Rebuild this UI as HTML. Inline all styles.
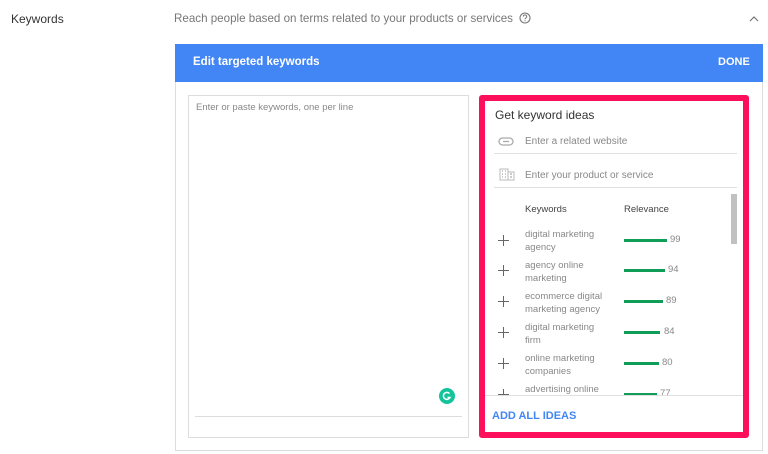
<!DOCTYPE html>
<html><head><style>
*{margin:0;padding:0;box-sizing:border-box}
body{width:768px;height:454px;background:#fff;font-family:"Liberation Sans",sans-serif;position:relative;overflow:hidden;color:#333}
.a{position:absolute}
.kw{font-size:9.5px;color:#888;line-height:12.5px;left:525px;width:90px}
.pl{left:498px;width:12px;height:12px}
.pl:before{content:"";position:absolute;left:0;top:5px;width:11px;height:1.4px;background:#666}
.pl:after{content:"";position:absolute;left:4.8px;top:0;width:1.4px;height:11px;background:#666}
.bar{left:624px;height:3px;background:#0f9d58}
.n{font-size:9.5px;color:#888}
</style></head><body>
<div class="a" style="left:11px;top:12px;font-size:12px;color:#333">Keywords</div>
<div class="a" style="left:174px;top:12px;font-size:11.6px;color:#777">Reach people based on terms related to your products or services</div>
<svg class="a" style="left:519px;top:12px" width="12" height="12" viewBox="0 0 12 12"><circle cx="6" cy="6" r="5" fill="none" stroke="#777" stroke-width="1.1"/><path d="M4.3 4.6a1.7 1.7 0 1 1 2.4 1.5c-.5.3-.7.6-.7 1.2" fill="none" stroke="#777" stroke-width="1"/><circle cx="6" cy="8.8" r=".6" fill="#777"/></svg>
<svg class="a" style="left:749px;top:15px" width="10" height="8"><path d="M1 6l4-4 4 4" fill="none" stroke="#777" stroke-width="1.2"/></svg>
<div class="a" style="left:175px;top:44px;width:588px;height:407px;border:1px solid #ddd;border-top:none"></div>
<div class="a" style="left:175px;top:44px;width:588px;height:38px;background:#4285f4"></div>
<div class="a" style="left:193px;top:56px;font-size:11.5px;color:#fff;font-weight:bold">Edit targeted keywords</div>
<div class="a" style="left:718px;top:56px;font-size:11px;color:#fff;font-weight:bold">DONE</div>
<div class="a" style="left:188px;top:95px;width:281px;height:343px;border:1px solid #ddd"></div>
<div class="a" style="left:196px;top:102px;font-size:9.5px;color:#888">Enter or paste keywords, one per line</div>
<div class="a" style="left:195px;top:416px;width:267px;height:1px;background:#ddd"></div>
<div class="a" style="left:439px;top:388px;width:16px;height:16px;border-radius:50%;background:#15c39a"></div>
<svg class="a" style="left:439px;top:388px" width="16" height="16"><path d="M10.5 5.5A3.5 3.5 0 1 0 11 9.5H8.5" fill="none" stroke="#fff" stroke-width="1.5"/></svg>
<div class="a" style="left:479px;top:95px;width:270px;height:343px;border:6px solid #fe0f5c;border-radius:3px"></div>
<div class="a" style="left:495px;top:108px;font-size:12px;color:#333">Get keyword ideas</div>
<svg class="a" style="left:498px;top:137px" width="16" height="9"><rect x="1" y="1" width="14" height="7" rx="3.5" fill="none" stroke="#aaa" stroke-width="1.3"/><path d="M5 4.5h6" stroke="#aaa" stroke-width="1.3"/></svg>
<div class="a" style="left:525px;top:136px;font-size:10px;color:#888">Enter a related website</div>
<div class="a" style="left:494px;top:153px;width:243px;height:1px;background:#e0e0e0"></div>
<svg class="a" style="left:499px;top:168px" width="16" height="13"><path d="M1 1h8v11H1zM9 4h6v8H9z" fill="none" stroke="#bbb"/><path d="M3 3h1M6 3h1M3 6h1M6 6h1M3 9h1M6 9h1M11 6h2M11 9h2" stroke="#bbb" stroke-width="1.4"/></svg>
<div class="a" style="left:525px;top:170px;font-size:10px;color:#888">Enter your product or service</div>
<div class="a" style="left:494px;top:187px;width:243px;height:1px;background:#e0e0e0"></div>
<div class="a" style="left:525px;top:204px;font-size:9.5px;color:#444">Keywords</div>
<div class="a" style="left:624px;top:204px;font-size:9.5px;color:#444">Relevance</div>
<div class="a" style="left:731px;top:194px;width:6px;height:50px;background:#c1c1c1"></div>
<div class="a" style="left:485px;top:192px;width:245px;height:203px;overflow:hidden">
 <div style="position:absolute;left:-485px;top:-192px;width:768px;height:454px">
  <div class="a pl" style="top:235px"></div><div class="a kw" style="top:229px">digital marketing<br>agency</div><div class="a bar" style="top:239px;width:43px"></div><div class="a n" style="left:670px;top:234px">99</div>
  <div class="a pl" style="top:265px"></div><div class="a kw" style="top:260px">agency online<br>marketing</div><div class="a bar" style="top:269px;width:41px"></div><div class="a n" style="left:668px;top:264px">94</div>
  <div class="a pl" style="top:296px"></div><div class="a kw" style="top:291px">ecommerce digital<br>marketing agency</div><div class="a bar" style="top:300px;width:39px"></div><div class="a n" style="left:666px;top:295px">89</div>
  <div class="a pl" style="top:327px"></div><div class="a kw" style="top:322px">digital marketing<br>firm</div><div class="a bar" style="top:331px;width:36px"></div><div class="a n" style="left:664px;top:326px">84</div>
  <div class="a pl" style="top:358px"></div><div class="a kw" style="top:353px">online marketing<br>companies</div><div class="a bar" style="top:362px;width:35px"></div><div class="a n" style="left:662px;top:357px">80</div>
  <div class="a pl" style="top:389px"></div><div class="a kw" style="top:384px">advertising online</div><div class="a bar" style="top:393px;width:33px"></div><div class="a n" style="left:660px;top:388px">77</div>
 </div>
</div>
<div class="a" style="left:485px;top:395px;width:258px;height:1px;background:#e0e0e0"></div>
<div class="a" style="left:492px;top:410px;font-size:11px;color:#4285f4;font-weight:bold">ADD ALL IDEAS</div>
</body></html>
